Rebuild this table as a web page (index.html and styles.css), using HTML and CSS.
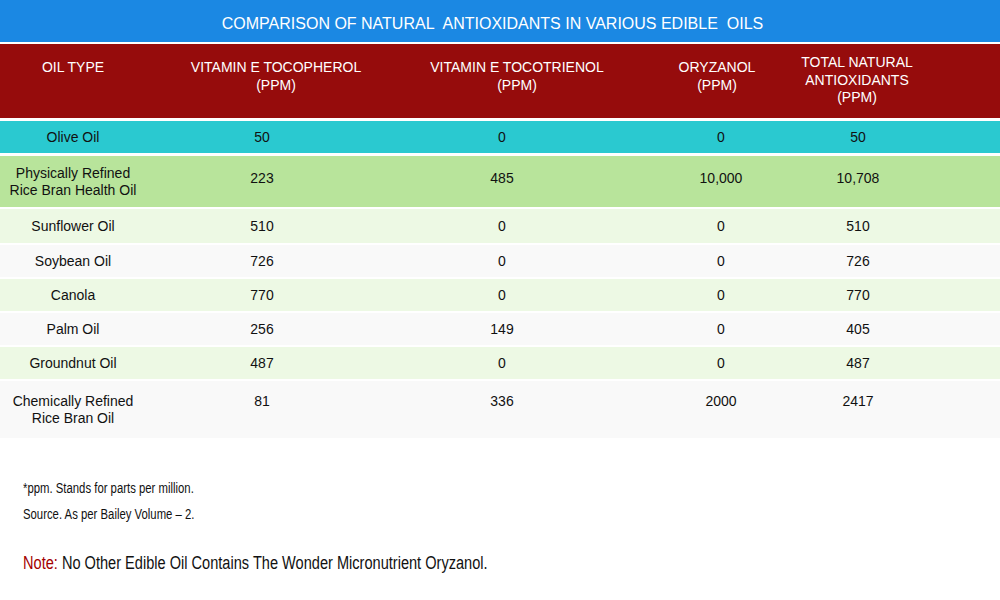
FILE: index.html
```
<!DOCTYPE html>
<html lang="en">
<head>
<meta charset="utf-8">
<title>Comparison of Natural Antioxidants</title>
<link rel="stylesheet" href="styles.css">
</head>
<body>
<div class="page">
  <div class="title">COMPARISON OF NATURAL&nbsp; ANTIOXIDANTS IN VARIOUS EDIBLE&nbsp; OILS</div>
  <div class="table">
    <div class="head">
      <div class="hcell"><span>OIL TYPE</span></div>
      <div class="hcell"><span>VITAMIN E TOCOPHEROL<br>(PPM)</span></div>
      <div class="hcell"><span>VITAMIN E TOCOTRIENOL<br>(PPM)</span></div>
      <div class="hcell"><span>ORYZANOL<br>(PPM)</span></div>
      <div class="hcell hcell-tall"><span>TOTAL NATURAL<br>ANTIOXIDANTS<br>(PPM)</span></div>
      <div></div>
    </div>
    <div class="row row-cyan">
      <div class="cell">Olive Oil</div><div class="cell">50</div><div class="cell">0</div><div class="cell">0</div><div class="cell">50</div><div></div>
    </div>
    <div class="row row-green">
      <div class="cell">Physically Refined<br>Rice Bran Health Oil</div><div class="cell num">223</div><div class="cell num">485</div><div class="cell num">10,000</div><div class="cell num">10,708</div><div></div>
    </div>
    <div class="row row-light row-first">
      <div class="cell">Sunflower Oil</div><div class="cell">510</div><div class="cell">0</div><div class="cell">0</div><div class="cell">510</div><div></div>
    </div>
    <div class="row row-gray">
      <div class="cell">Soybean Oil</div><div class="cell">726</div><div class="cell">0</div><div class="cell">0</div><div class="cell">726</div><div></div>
    </div>
    <div class="row row-light">
      <div class="cell">Canola</div><div class="cell">770</div><div class="cell">0</div><div class="cell">0</div><div class="cell">770</div><div></div>
    </div>
    <div class="row row-gray">
      <div class="cell">Palm Oil</div><div class="cell">256</div><div class="cell">149</div><div class="cell">0</div><div class="cell">405</div><div></div>
    </div>
    <div class="row row-light">
      <div class="cell">Groundnut Oil</div><div class="cell">487</div><div class="cell">0</div><div class="cell">0</div><div class="cell">487</div><div></div>
    </div>
    <div class="row row-gray row-last">
      <div class="cell">Chemically Refined<br>Rice Bran Oil</div><div class="cell num-top">81</div><div class="cell num-top">336</div><div class="cell num-top">2000</div><div class="cell num-top">2417</div><div></div>
    </div>
  </div>
  <div class="notes">
    <p class="small">*ppm. Stands for parts per million.</p>
    <p class="small">Source. As per Bailey Volume – 2.</p>
    <p class="note"><span class="note-label">Note:</span> No Other Edible Oil Contains The Wonder Micronutrient Oryzanol.</p>
  </div>
</div>
</body>
</html>
```
FILE: styles.css
```
html, body {
  margin: 0;
  padding: 0;
  background: #ffffff;
}
body {
  font-family: "Liberation Sans", Arial, sans-serif;
  color: #111111;
  width: 1000px;
  height: 600px;
  overflow: hidden;
}
.page {
  display: flex;
  flex-direction: column;
}
.title {
  height: 42px;
  background: #1b88e3;
  color: #ffffff;
  font-size: 16px;
  line-height: 20px;
  padding: 14px 15px 0 0;
  box-sizing: border-box;
  text-align: center;
  white-space: nowrap;
}
.table {
  display: flex;
  flex-direction: column;
  margin-top: 2px;
}
.head {
  display: grid;
  grid-template-columns: 146px 260px 222px 178px 102px 1fr;
  height: 74px;
  background: #960c0c;
  color: #ffffff;
  font-size: 14px;
  line-height: 17.5px;
  margin-bottom: 3px;
}
.hcell {
  display: flex;
  justify-content: center;
  align-items: flex-start;
  text-align: center;
  white-space: nowrap;
  padding-top: 15px;
}
.hcell-tall {
  padding-top: 10px;
}
.row {
  display: grid;
  grid-template-columns: 146px 232px 248px 190px 84px 1fr;
  align-items: center;
  font-size: 14px;
  line-height: 17px;
  height: 32px;
  margin-bottom: 2px;
}
.cell {
  text-align: center;
  white-space: nowrap;
}
.row-cyan {
  background: #2ac9d0;
  margin-bottom: 3px;
}
.row-green {
  background: #b8e49b;
  height: 51px;
}
.row-light {
  background: #edf9e4;
}
.row-gray {
  background: #f9f9f9;
}
.row-first {
  height: 34px;
}
.row-last {
  height: 57px;
}
.num {
  padding-bottom: 6px;
}
.num-top {
  padding-bottom: 17px;
}
.notes {
  padding: 35px 0 0 23px;
  color: #111111;
  transform: scaleX(0.81);
  transform-origin: 23px 0;
}
.notes p {
  margin: 0;
}
.small {
  font-size: 14px;
  line-height: 26px;
}
.note {
  margin-top: 24px !important;
  font-size: 18px;
  line-height: 24px;
}
.note-label {
  color: #a30000;
}
```
